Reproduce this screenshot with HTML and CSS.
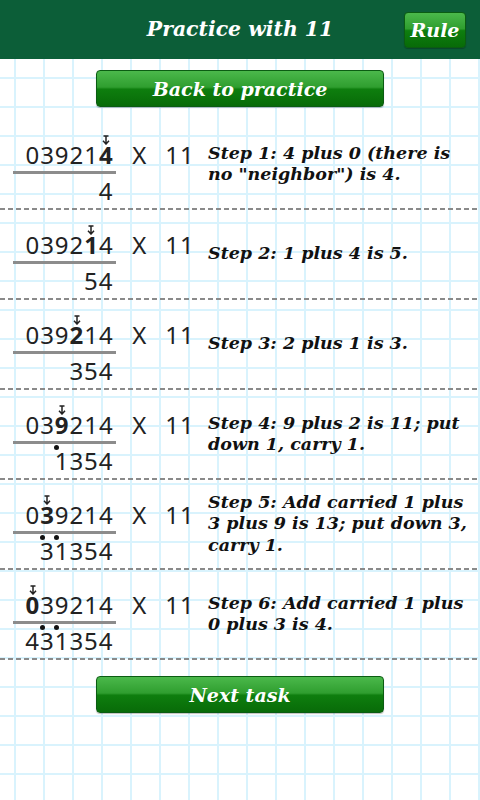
FILE: index.html
```html
<!DOCTYPE html>
<html>
<head>
<meta charset="utf-8">
<link rel="stylesheet" href="styles.css">
</head>
<body>
<header class="top">
  <span></span>
  <h1 class="title">Practice with 11</h1>
  <button class="btn btn-rule">Rule</button>
</header>
<main class="content">
  <button class="btn btn-wide btn-back">Back to practice</button>
  <section class="steps">
    <div class="row">
      <div class="calc">
        <div class="eq"><span class="num"><span class="d">0</span><span class="d">3</span><span class="d">9</span><span class="d">2</span><span class="d">1</span><span class="d cur"><svg class="arrow" viewBox="0 0 10 10"><path d="M2.5 1H7.5M5 1V8.5M2 5.8L5 9L8 5.8" fill="none" stroke="#222" stroke-width="1.5"/></svg>4</span></span><span class="x">X</span><span class="m">11</span></div>
        <div class="bar"></div>
        <div class="res"><span class="d">4</span></div>
      </div>
      <p class="step">Step 1: 4 plus 0 (there is no "neighbor") is 4.</p>
    </div>
    <div class="row">
      <div class="calc">
        <div class="eq"><span class="num"><span class="d">0</span><span class="d">3</span><span class="d">9</span><span class="d">2</span><span class="d cur"><svg class="arrow" viewBox="0 0 10 10"><path d="M2.5 1H7.5M5 1V8.5M2 5.8L5 9L8 5.8" fill="none" stroke="#222" stroke-width="1.5"/></svg>1</span><span class="d">4</span></span><span class="x">X</span><span class="m">11</span></div>
        <div class="bar"></div>
        <div class="res"><span class="d">5</span><span class="d">4</span></div>
      </div>
      <p class="step">Step 2: 1 plus 4 is 5.</p>
    </div>
    <div class="row">
      <div class="calc">
        <div class="eq"><span class="num"><span class="d">0</span><span class="d">3</span><span class="d">9</span><span class="d cur"><svg class="arrow" viewBox="0 0 10 10"><path d="M2.5 1H7.5M5 1V8.5M2 5.8L5 9L8 5.8" fill="none" stroke="#222" stroke-width="1.5"/></svg>2</span><span class="d">1</span><span class="d">4</span></span><span class="x">X</span><span class="m">11</span></div>
        <div class="bar"></div>
        <div class="res"><span class="d">3</span><span class="d">5</span><span class="d">4</span></div>
      </div>
      <p class="step">Step 3: 2 plus 1 is 3.</p>
    </div>
    <div class="row">
      <div class="calc">
        <div class="eq"><span class="num"><span class="d">0</span><span class="d">3</span><span class="d cur"><svg class="arrow" viewBox="0 0 10 10"><path d="M2.5 1H7.5M5 1V8.5M2 5.8L5 9L8 5.8" fill="none" stroke="#222" stroke-width="1.5"/></svg>9</span><span class="d">2</span><span class="d">1</span><span class="d">4</span></span><span class="x">X</span><span class="m">11</span></div>
        <div class="bar"></div>
        <div class="res"><span class="d carry">1</span><span class="d">3</span><span class="d">5</span><span class="d">4</span></div>
      </div>
      <p class="step">Step 4: 9 plus 2 is 11; put down 1, carry 1.</p>
    </div>
    <div class="row">
      <div class="calc">
        <div class="eq"><span class="num"><span class="d">0</span><span class="d cur"><svg class="arrow" viewBox="0 0 10 10"><path d="M2.5 1H7.5M5 1V8.5M2 5.8L5 9L8 5.8" fill="none" stroke="#222" stroke-width="1.5"/></svg>3</span><span class="d">9</span><span class="d">2</span><span class="d">1</span><span class="d">4</span></span><span class="x">X</span><span class="m">11</span></div>
        <div class="bar"></div>
        <div class="res"><span class="d carry">3</span><span class="d carry">1</span><span class="d">3</span><span class="d">5</span><span class="d">4</span></div>
      </div>
      <p class="step">Step 5: Add carried 1 plus 3 plus 9 is 13; put down 3, carry 1.</p>
    </div>
    <div class="row">
      <div class="calc">
        <div class="eq"><span class="num"><span class="d cur"><svg class="arrow" viewBox="0 0 10 10"><path d="M2.5 1H7.5M5 1V8.5M2 5.8L5 9L8 5.8" fill="none" stroke="#222" stroke-width="1.5"/></svg>0</span><span class="d">3</span><span class="d">9</span><span class="d">2</span><span class="d">1</span><span class="d">4</span></span><span class="x">X</span><span class="m">11</span></div>
        <div class="bar"></div>
        <div class="res"><span class="d">4</span><span class="d carry">3</span><span class="d carry">1</span><span class="d">3</span><span class="d">5</span><span class="d">4</span></div>
      </div>
      <p class="step">Step 6: Add carried 1 plus 0 plus 3 is 4.</p>
    </div>
  </section>
  <button class="btn btn-wide btn-next">Next task</button>
</main>
</body>
</html>
```
FILE: styles.css
```css
html, body {
  margin: 0;
  padding: 0;
}
body {
  width: 480px;
  min-height: 800px;
  background-color: #ffffff;
  background-image:
    linear-gradient(to right, #d9f3fd 2px, transparent 2px),
    linear-gradient(to bottom, #d9f3fd 2px, transparent 2px);
  background-size: 29px 29px;
  background-position: 14px 19px;
  font-family: "Noto Sans", "Open Sans", sans-serif;
  color: #111;
}
.top {
  height: 59px;
  background: #0c5e38;
  display: grid;
  grid-template-columns: 1fr auto 1fr;
  align-items: center;
}
.title {
  margin: 0;
  color: #fff;
  font-family: "DejaVu Serif", serif;
  font-style: italic;
  font-weight: bold;
  font-size: 20.4px;
  line-height: 24px;
  padding-bottom: 1px;
}
.btn {
  display: block;
  border: 1px solid #0b5c12;
  border-radius: 4px;
  background: linear-gradient(to bottom, #4bb84b 0%, #2f9e2f 46%, #0e7e0e 52%, #086b08 100%);
  color: #fff;
  font-family: "DejaVu Serif", serif;
  font-style: italic;
  font-weight: bold;
  padding: 0;
  box-shadow: 0 1px 1px rgba(0,0,0,0.25);
}
.btn-rule {
  justify-self: end;
  margin-right: 14px;
  width: 62px;
  height: 36px;
  font-size: 19px;
}
.content {
  display: flex;
  flex-direction: column;
  align-items: center;
  padding-top: 11px;
}
.btn-wide {
  width: 288px;
  height: 37px;
  font-size: 19px;
}
.steps {
  align-self: stretch;
  margin-top: 12px;
}
.row {
  position: relative;
  height: 90px;
  display: flex;
  align-items: center;
}
.row::after {
  content: "";
  position: absolute;
  left: 0;
  right: 0;
  bottom: -1px;
  height: 2px;
  background: repeating-linear-gradient(to right, #8a8a8a 0 5px, transparent 5px 8px);
}
.calc {
  width: 208px;
  flex: none;
  align-self: stretch;
  padding-top: 24px;
  box-sizing: border-box;
  font-size: 24px;
  line-height: 24px;
  color: #222;
}
.eq {
  display: flex;
  padding-left: 25px;
}
.num, .res {
  display: flex;
}
.d {
  position: relative;
  width: 14.7px;
  text-align: center;
}
.cur {
  font-weight: bold;
}
.arrow {
  position: absolute;
  left: 2.5px;
  top: -8px;
  width: 10px;
  height: 10px;
}
.x {
  margin-left: 19px;
}
.m {
  margin-left: 19px;
  letter-spacing: 1px;
}
.bar {
  margin: 4px 0 0 13px;
  width: 103px;
  height: 3px;
  background: #8c8c8c;
}
.res {
  margin-top: 5px;
  width: 113px;
  justify-content: flex-end;
}
.carry::before {
  content: "";
  position: absolute;
  left: 0px;
  top: -4px;
  width: 5px;
  height: 5px;
  border-radius: 50%;
  background: #111;
}
.step {
  margin: 0;
  padding-right: 8px;
  font-family: "DejaVu Serif", serif;
  font-style: italic;
  font-weight: bold;
  font-size: 17.5px;
  line-height: 21.5px;
  color: #111;
}
.btn-next {
  margin-top: 17px;
}
```
